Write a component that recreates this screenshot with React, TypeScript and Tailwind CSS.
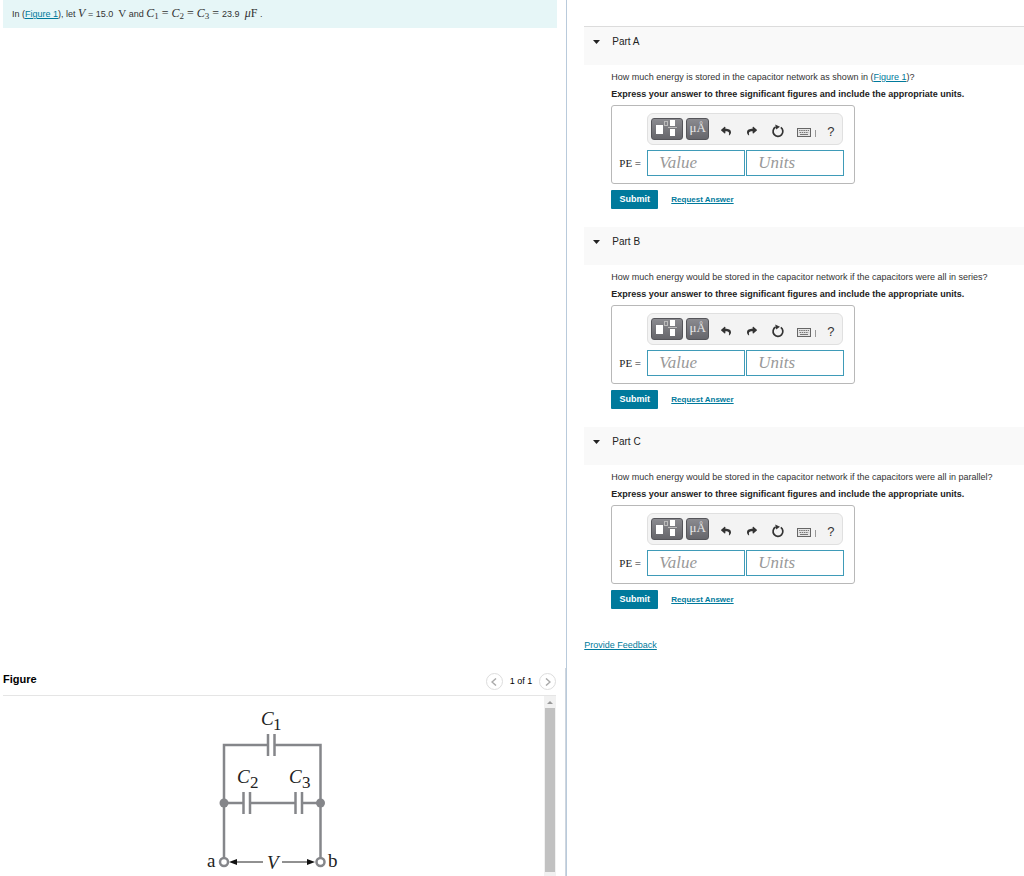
import { FaReply, FaShare } from "react-icons/fa"

const parts = [
  {
    name: "Part A",
    question: "How much energy is stored in the capacitor network as shown in ",
    figureLink: true,
  },
  {
    name: "Part B",
    question:
      "How much energy would be stored in the capacitor network if the capacitors were all in series?",
  },
  {
    name: "Part C",
    question:
      "How much energy would be stored in the capacitor network if the capacitors were all in parallel?",
  },
]

const serif = "font-['Liberation_Serif',serif]"
const link = "text-[#007a9c] underline"

function TemplateIcon() {
  return (
    <svg width="24" height="18" viewBox="0 0 24 18">
      <rect x="1" y="5" width="7" height="9" fill="#fff" />
      <rect x="9.5" y="1.5" width="3" height="4" fill="none" stroke="#bbb" />
      <rect x="15" y="0" width="5" height="6" fill="#fff" />
      <path d="M13 7.500h9" stroke="#bbb" />
      <rect x="15" y="9" width="5" height="7" fill="#fff" />
    </svg>
  )
}

function ResetIcon() {
  return (
    <svg width="14" height="14" viewBox="0 0 14 14">
      <path
        d="M4.600 3.100A4.900 4.900 0 1 0 9.800 3.400"
        fill="none"
        stroke="#333"
        strokeWidth="1.700"
      />
      <path d="M4.200 0.600 9 2.700 5.200 5.500Z" fill="#333" />
    </svg>
  )
}

function KeyboardIcon() {
  return (
    <svg width="14" height="9" viewBox="0 0 14 9">
      <rect x="0.500" y="0.500" width="13" height="8" fill="#e4e4e4" stroke="#666" />
      <path
        d="M2 2.500h10M2.500 4.500h9"
        stroke="#777"
        strokeDasharray="1.500 0.700"
      />
      <path d="M3 6.500h8" stroke="#777" />
    </svg>
  )
}

function Toolbar() {
  const dark =
    "h-[22px] flex items-center justify-center rounded-[3px] border border-[#55555a] bg-linear-to-b from-[#8b8b90] to-[#66666b]"

  return (
    <div className="h-8 flex items-center rounded-md border border-[#e0e0e0] bg-[#f3f3f3] pl-[3px] text-[#333]">
      <button aria-label="Templates" className={`${dark} w-8 mr-[3px]`}>
        <TemplateIcon />
      </button>
      <button
        aria-label="Symbols"
        className={`${dark} ${serif} w-[23px] pb-[3px] text-[13px] leading-none text-[#e8e8e8]`}
      >
        μÅ
      </button>
      <button aria-label="Undo" className="ml-3 pt-1">
        <FaReply size={10} />
      </button>
      <button aria-label="Redo" className="ml-4 pt-1">
        <FaShare size={10} />
      </button>
      <button aria-label="Reset" className="ml-[14px] pt-1">
        <ResetIcon />
      </button>
      <button aria-label="Keyboard" className="ml-3 pt-[7px]">
        <KeyboardIcon />
      </button>
      <span className="ml-1 mt-2 h-[7px] w-px bg-[#999]" />
      <button aria-label="Help" className="ml-[11px] pt-1 text-[13px] leading-none">
        ?
      </button>
    </div>
  )
}

function AnswerBox({ id }: { id: string }) {
  const field = `${serif} w-[98px] h-[26px] border border-[#3f9bb8] bg-white pl-[11px] text-[17px] italic outline-none placeholder:text-[#999]`

  return (
    <div className="w-[244px] h-[79px] mt-[2px] rounded-[3px] border border-[#b8b8b8] bg-white pl-[7px] pt-[7px] pr-[11px]">
      <div className="ml-[28px]">
        <Toolbar />
      </div>
      <div className="mt-[5px] flex items-center gap-px">
        <label
          htmlFor={`${id}-value`}
          className={`${serif} w-[27px] shrink-0 text-[11px] whitespace-nowrap text-[#222]`}
        >
          PE =
        </label>
        <input id={`${id}-value`} placeholder="Value" className={field} />
        <input aria-label="Units" placeholder="Units" className={field} />
      </div>
    </div>
  )
}

function Part({ name, question, figureLink }: (typeof parts)[number]) {
  return (
    <section className="pb-[18px]">
      <header className="h-[38px] bg-[#f9f9f9] pl-[9px] pt-[7px]">
        <button className="flex items-center gap-3 text-[10px] leading-[15px] text-[#222]">
          <svg width="7" height="4" viewBox="0 0 7 4">
            <path d="M0 0h7L3.500 4Z" fill="#222" />
          </svg>
          {name}
        </button>
      </header>
      <div className="pl-[27px] pt-1">
        <p className="text-[9px] leading-[17px]">
          {question}
          {figureLink && (
            <>
              (
              <a href="#figure" className={link}>
                Figure 1
              </a>
              )?
            </>
          )}
        </p>
        <p className="text-[9px] leading-[17px] font-bold text-[#222]">
          Express your answer to three significant figures and include the
          appropriate units.
        </p>
        <AnswerBox id={name.replace(" ", "-")} />
        <div className="mt-[6px] flex items-center gap-[13px]">
          <button className="h-[19px] w-[47px] rounded-[1px] bg-[#007a9c] text-[9px] font-bold text-white">
            Submit
          </button>
          <a href="#answer" className={`${link} text-[8px] font-bold`}>
            Request Answer
          </a>
        </div>
      </div>
    </section>
  )
}

function Circuit() {
  return (
    <svg
      width="148"
      height="176"
      viewBox="200 700 148 176"
      className={serif}
      role="img"
      aria-label="Capacitor network"
    >
      <g fill="none" stroke="#85868a" strokeWidth="2.500">
        <path d="M268 745H224V857M275 745H320.500V857" />
        <path d="M268 734v22M274.500 734v22" />
        <path d="M224 803h20M250 803h46M302 803h18" />
        <path d="M243.500 792v22M250 792v22M295.500 792v22M302 792v22" />
        <circle cx="224" cy="862" r="4" />
        <circle cx="320.500" cy="862" r="4" />
      </g>
      <circle cx="224" cy="803" r="4.500" fill="#85868a" />
      <circle cx="320.500" cy="803" r="4.500" fill="#85868a" />
      <path d="M234 862h29M282 862h28" stroke="#222" />
      <path d="M229 862l8-3v6ZM315 862l-8-3v6Z" fill="#111" />
      <g fill="#222" fontSize="19">
        <text x="261" y="725" fontStyle="italic">C</text>
        <text x="273" y="730" fontSize="17">1</text>
        <text x="237" y="783" fontStyle="italic">C</text>
        <text x="250" y="788" fontSize="17">2</text>
        <text x="289" y="783" fontStyle="italic">C</text>
        <text x="302" y="788" fontSize="17">3</text>
        <text x="207" y="867">a</text>
        <text x="267" y="869" fontStyle="italic">V</text>
        <text x="328" y="867">b</text>
      </g>
    </svg>
  )
}

function Figure() {
  const pager =
    "size-[17px] flex items-center justify-center rounded-full border border-[#ddd]"

  return (
    <section id="figure" className="border-r border-[#cfd6de] pr-[9px]">
      <header className="h-[27px] flex items-center justify-between">
        <h2 className="pb-[5px] text-[11px] font-bold text-black">Figure</h2>
        <div className="flex items-center gap-[7px] text-[9px] text-black">
          <button aria-label="Previous" className={pager}>
            <svg width="6" height="8" viewBox="0 0 6 8">
              <path d="M5 0.500 1 4l4 3.500" fill="none" stroke="#aaa" strokeWidth="1.500" />
            </svg>
          </button>
          1 of 1
          <button aria-label="Next" className={pager}>
            <svg width="6" height="8" viewBox="0 0 6 8">
              <path d="M1 0.500 5 4 1 7.500" fill="none" stroke="#aaa" strokeWidth="1.500" />
            </svg>
          </button>
        </div>
      </header>
      <div className="flex border-t border-[#e5e5e5]">
        <div className="flex-1 flex justify-center pt-1">
          <Circuit />
        </div>
        <div className="w-3 flex flex-col items-center bg-[#f1f1f1] pb-1">
          <svg width="12" height="12" viewBox="0 0 12 12">
            <path d="M3 8 6 5l3 3Z" fill="#999" />
          </svg>
          <div className="w-[10px] flex-1 bg-[#c1c1c1]" />
        </div>
      </div>
    </section>
  )
}

function Capacitor({ index }: { index: number }) {
  return (
    <>
      <i>C</i>
      <sub className="text-[9px]">{index}</sub>
    </>
  )
}

function Problem() {
  return (
    <p className="mr-[9px] h-7 bg-[#e6f6f7] pl-[9px] text-[9px] leading-[27px] whitespace-pre">
      In (
      <a href="#figure" className={link}>
        Figure 1
      </a>
      ), let <i className={`${serif} text-[12px]`}>V</i> = 15.0{"  "}
      <span className={`${serif} text-[11px]`}>V</span> and{" "}
      <span className={`${serif} text-[12px]`}>
        <Capacitor index={1} /> = <Capacitor index={2} /> ={" "}
        <Capacitor index={3} /> ={" "}
      </span>
      23.9{"  "}
      <span className={`${serif} text-[12px]`}>
        <i>μ</i>F
      </span>{" "}
      .
    </p>
  )
}

export default function App() {
  return (
    <div className="min-h-screen flex bg-white font-['Liberation_Sans',Arial,sans-serif] text-[#333]">
      <div className="w-[55.300%] shrink-0 flex flex-col justify-between pl-[3px]">
        <Problem />
        <Figure />
      </div>
      <main className="flex-1 border-l border-[#b9cadb] pl-[17px] pt-[26px]">
        <div className="border-t border-[#dcdcdc]">
          {parts.map((part) => (
            <Part key={part.name} {...part} />
          ))}
        </div>
        <a href="#feedback" className={`${link} mt-3 inline-block text-[9px]`}>
          Provide Feedback
        </a>
      </main>
    </div>
  )
}
